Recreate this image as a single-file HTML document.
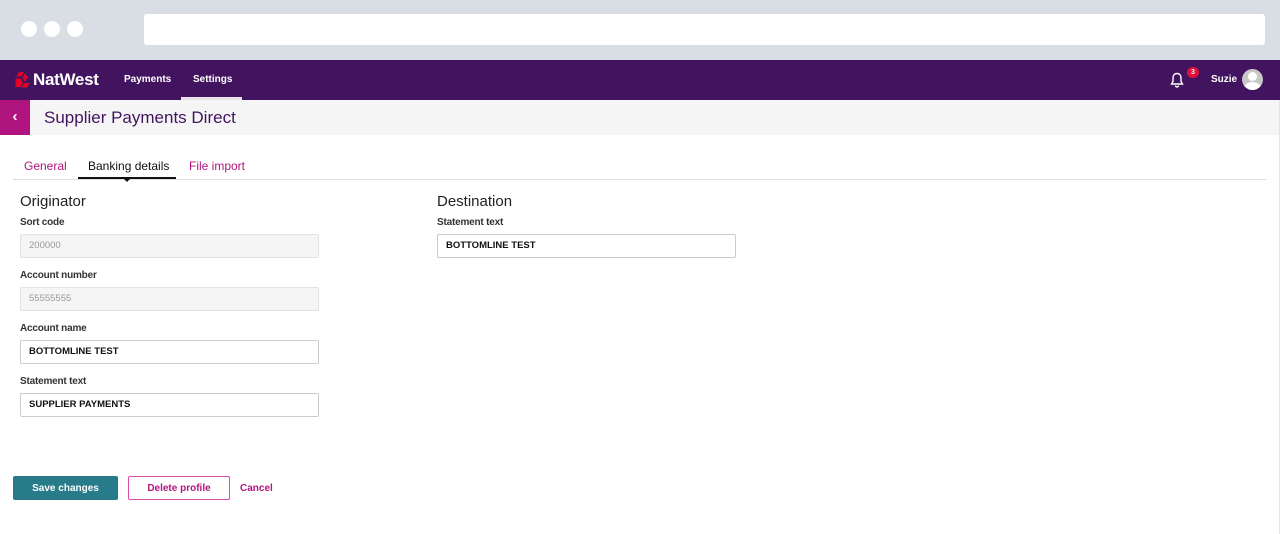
<!DOCTYPE html>
<html><head><style>
*{margin:0;padding:0;box-sizing:border-box}
body{width:1280px;height:534px;overflow:hidden;background:#fff;font-family:"Liberation Sans",sans-serif;position:relative}
.abs{position:absolute}
.chrome{left:0;top:0;width:1280px;height:60px;background:#d9dee4}
.dot{width:16px;height:16px;border-radius:50%;background:#fff;top:21px}
.url{left:144px;top:14px;width:1121px;height:31px;background:#fff;border-radius:3px}
.nav{left:0;top:60px;width:1280px;height:40px;background:#42145f;color:#fff}
.hdr{left:0;top:100px;width:1280px;height:35px;background:#f5f5f5}
.lbl{font-size:10px;font-weight:bold;color:#333;letter-spacing:-0.2px}
.inp{width:299px;height:24px;border:1px solid #ccc;border-radius:2px;font-size:9.5px;padding:0 8px;line-height:22px;font-weight:bold;color:#111}
.dis{background:#f5f5f5;border-color:#e2e2e2;color:#999;font-weight:normal}
h2{font-weight:normal;font-size:15px;color:#222;position:absolute}
</style></head><body>
<div class="abs chrome"></div>
<div class="abs dot" style="left:21px"></div>
<div class="abs dot" style="left:44px"></div>
<div class="abs dot" style="left:67px"></div>
<div class="abs url"></div>
<div class="abs nav">
 <svg class="abs" style="left:13px;top:11px" width="18" height="17" viewBox="0 0 18 17"><g fill="#e60028"><path d="M6 1h5l-2.5 4.5H3.5z"/><path d="M12 2l2.5 4.5-2.5 4.5-2.5-4.5z"/><path d="M2.5 7.5l5 0 2.5 4.5-2.5 4-5 0z"/><path d="M11 12h5.5l-2.5 4.5H8.5z"/></g></svg>
 <div class="abs" style="left:33px;top:10px;font-size:17px;font-weight:bold;letter-spacing:-0.3px">NatWest</div>
 <div class="abs" style="left:124px;top:14px;font-size:10px;font-weight:bold">Payments</div>
 <div class="abs" style="left:193px;top:14px;font-size:10px;font-weight:bold">Settings</div>
 <div class="abs" style="left:181px;top:37px;width:61px;height:3px;background:#e8e3ec"></div>
 <svg class="abs" style="left:1170px;top:12px" width="14" height="16" viewBox="0 0 14 16"><path d="M7 1.5c-2.6 0-4 2-4 4.5v3.5L1.5 12h11L11 9.5V6c0-2.5-1.4-4.5-4-4.5zM5.5 13.5a1.5 1.5 0 0 0 3 0" fill="none" stroke="#fff" stroke-width="1.4"/></svg>
 <div class="abs" style="left:1187px;top:7px;width:12px;height:11px;border-radius:6px;background:#e0103a;font-size:7px;font-weight:bold;text-align:center;line-height:11px">3</div>
 <div class="abs" style="left:1211px;top:14px;font-size:10px;font-weight:bold">Suzie</div>
 <div class="abs" style="left:1242px;top:9px;width:21px;height:21px;border-radius:50%;background:#c8c8c8;overflow:hidden"><div class="abs" style="left:6px;top:3px;width:9px;height:9px;border-radius:50%;background:#fff"></div><div class="abs" style="left:2px;top:13px;width:17px;height:12px;border-radius:50%;background:#fff"></div></div>
</div>
<div class="abs hdr">
 <div class="abs" style="left:0;top:0;width:30px;height:35px;background:#b0157f;color:#fff;font-weight:bold;font-size:15px;text-align:center;line-height:34px">‹</div>
 <div class="abs" style="left:44px;top:8px;font-size:17px;color:#42145f">Supplier Payments Direct</div>
</div>
<div class="abs" style="left:1279px;top:100px;width:1px;height:434px;background:#e4e4e4"></div>
<div class="abs" style="left:24px;top:159px;font-size:12px;color:#b0157f">General</div>
<div class="abs" style="left:88px;top:159px;font-size:12px;color:#111">Banking details</div>
<div class="abs" style="left:189px;top:159px;font-size:12px;color:#b0157f">File import</div>
<div class="abs" style="left:13px;top:179px;width:1253px;height:1px;background:#ddd"></div>
<div class="abs" style="left:78px;top:177px;width:98px;height:2px;background:#111"></div>
<div class="abs" style="left:124px;top:179px;width:0;height:0;border-left:3px solid transparent;border-right:3px solid transparent;border-top:3px solid #111"></div>
<h2 style="left:20px;top:193px">Originator</h2>
<h2 style="left:437px;top:193px">Destination</h2>
<div class="abs lbl" style="left:20px;top:217px">Sort code</div>
<div class="abs inp dis" style="left:20px;top:234px">200000</div>
<div class="abs lbl" style="left:20px;top:270px">Account number</div>
<div class="abs inp dis" style="left:20px;top:287px">55555555</div>
<div class="abs lbl" style="left:20px;top:323px">Account name</div>
<div class="abs inp" style="left:20px;top:340px">BOTTOMLINE TEST</div>
<div class="abs lbl" style="left:20px;top:376px">Statement text</div>
<div class="abs inp" style="left:20px;top:393px">SUPPLIER PAYMENTS</div>
<div class="abs lbl" style="left:437px;top:217px">Statement text</div>
<div class="abs inp" style="left:437px;top:234px">BOTTOMLINE TEST</div>
<div class="abs" style="left:13px;top:476px;width:105px;height:24px;background:#287c8a;border-radius:2px;color:#fff;font-size:10px;font-weight:bold;text-align:center;line-height:25px">Save changes</div>
<div class="abs" style="left:128px;top:476px;width:102px;height:24px;border:1px solid #d64fa6;border-radius:2px;color:#b0157f;font-size:10px;font-weight:bold;text-align:center;line-height:23px">Delete profile</div>
<div class="abs" style="left:240px;top:483px;color:#b0157f;font-size:10px;font-weight:bold">Cancel</div>
</body></html>
